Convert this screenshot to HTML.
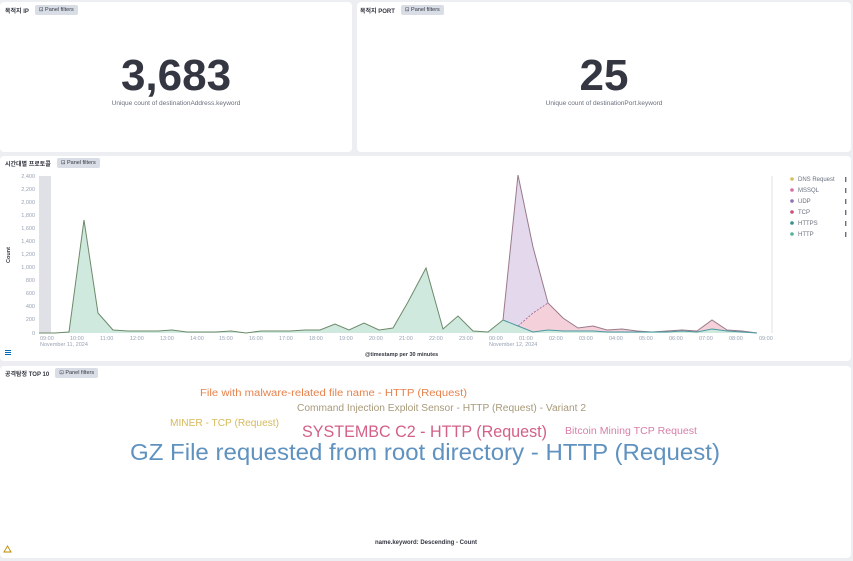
<!DOCTYPE html>
<html><head><meta charset="utf-8"><style>
*{margin:0;padding:0;box-sizing:border-box}
body{width:853px;height:561px;background:#eceef2;font-family:"Liberation Sans","Noto Sans CJK KR",sans-serif;position:relative;overflow:hidden}
.p{position:absolute;background:#fff;border-radius:4px}
.t{position:absolute;font-size:6px;font-weight:bold;color:#343741;display:flex;align-items:center;gap:6px}
.pf{background:#d9dde6;color:#343741;font-weight:normal;padding:2px 4px;border-radius:2px;font-size:5.5px}
.big{position:absolute;width:100%;text-align:center;font-weight:bold;color:#343741;font-size:44px;line-height:44px}
.sub{position:absolute;width:100%;text-align:center;color:#69707d;font-size:6.5px}
</style></head><body>
<div class="p" style="left:0;top:2px;width:352px;height:150px">
<div class="t" style="left:5px;top:3px">목적지 IP <span class="pf">⊡ Panel filters</span></div>
<div class="big" style="top:52px">3,683</div>
<div class="sub" style="top:98px">Unique count of destinationAddress.keyword</div>
</div>
<div class="p" style="left:357px;top:2px;width:494px;height:150px">
<div class="t" style="left:3px;top:3px">목적지 PORT <span class="pf">⊡ Panel filters</span></div>
<div class="big" style="top:52px">25</div>
<div class="sub" style="top:98px">Unique count of destinationPort.keyword</div>
</div>
<div class="p" style="left:0;top:156px;width:851px;height:205px"></div>
<div class="t" style="left:5px;top:158px">시간대별 프로토콜 <span class="pf">⊡ Panel filters</span></div>
<svg style="position:absolute;left:0;top:0" width="853" height="561" font-family="Liberation Sans" font-size="5.5" fill="#98a2b3">
<rect x="39" y="176" width="12" height="157" fill="#dfe1e6"/>
<g text-anchor="end">
<text x="35" y="178">2,400</text><text x="35" y="191">2,200</text><text x="35" y="204">2,000</text><text x="35" y="217">1,800</text><text x="35" y="230">1,600</text><text x="35" y="243">1,400</text><text x="35" y="256">1,200</text><text x="35" y="269">1,000</text><text x="35" y="282">800</text><text x="35" y="295">600</text><text x="35" y="308">400</text><text x="35" y="321">200</text><text x="35" y="335">0</text>
</g>
<text x="10" y="255" transform="rotate(-90 10 255)" text-anchor="middle" fill="#343741" font-weight="bold">Count</text>
<g>
<text x="40" y="340">09:00</text><text x="40" y="346">November 11, 2024</text>
<text x="70" y="340">10:00</text><text x="100" y="340">11:00</text><text x="130" y="340">12:00</text><text x="160" y="340">13:00</text><text x="190" y="340">14:00</text><text x="219" y="340">15:00</text><text x="249" y="340">16:00</text><text x="279" y="340">17:00</text><text x="309" y="340">18:00</text><text x="339" y="340">19:00</text><text x="369" y="340">20:00</text><text x="399" y="340">21:00</text><text x="429" y="340">22:00</text><text x="459" y="340">23:00</text><text x="489" y="340">00:00</text><text x="489" y="346">November 12, 2024</text><text x="519" y="340">01:00</text><text x="549" y="340">02:00</text><text x="579" y="340">03:00</text><text x="609" y="340">04:00</text><text x="639" y="340">05:00</text><text x="669" y="340">06:00</text><text x="699" y="340">07:00</text><text x="729" y="340">08:00</text><text x="759" y="340">09:00</text>
</g>
<text x="365" y="356" fill="#343741" font-weight="bold">@timestamp per 30 minutes</text>
<line x1="772" y1="176" x2="772" y2="333" stroke="#dfe1e6" stroke-width="1"/>
<polygon fill="#cfe9df" points="39,333 55,333 69,332 84,220 98,313 113,330 128,331 143,331 158,331 172,330 187,332 202,332 216,332 231,331 246,333 261,331 275,331 290,331 305,330 320,330 335,324 349,330 364,323 379,330 393,328 408,302 426,268 443,329 458,316 473,331 488,332 503,320 518,326 533,332 548,330 563,331 578,331 593,331 607,332 622,332 637,332 652,332 667,332 682,331 697,332 712,329 727,331 742,332 757,333 757,333"/>
<polygon fill="#e3d8ec" points="503,320 518,175 533,247 548,303 533,313 518,326"/>
<polygon fill="#f4d0da" points="518,326 533,313 548,303 563,318 578,328 593,326 607,330 622,329 637,331 652,332 667,331 682,330 697,331 712,320 727,330 742,331 757,333 742,332 727,331 712,329 697,332 682,331 667,332 652,332 637,332 622,332 607,332 593,331 578,331 563,331 548,330 533,332"/>
<polyline fill="none" stroke="#6d8a6a" stroke-width="1" points="39,333 55,333 69,332 84,220 98,313 113,330 128,331 143,331 158,331 172,330 187,332 202,332 216,332 231,331 246,333 261,331 275,331 290,331 305,330 320,330 335,324 349,330 364,323 379,330 393,328 408,302 426,268 443,329 458,316 473,331 488,332 503,320"/>
<polyline fill="none" stroke="#9a7a8a" stroke-width="1" points="503,320 518,175 533,247 548,303 563,318 578,328 593,326 607,330 622,329 637,331 652,332 667,331 682,330 697,331 712,320 727,330 742,331 757,333"/>
<polyline fill="none" stroke="#9b5c8f" stroke-width="0.8" stroke-dasharray="2,1.5" points="518,326 533,313 548,303"/>
<polyline fill="none" stroke="#4a9aa0" stroke-width="1" points="503,320 518,326 533,332 548,330 563,331 578,331 593,331 607,332 622,332 637,332 652,332 667,332 682,331 697,332 712,329 727,331 742,332 757,333"/>
<g font-size="6" fill="#69707d">
<circle cx="792" cy="179" r="1.8" fill="#d6bf57"/><text x="798" y="181">DNS Request</text>
<circle cx="792" cy="190" r="1.8" fill="#d36fa8"/><text x="798" y="192">MSSQL</text>
<circle cx="792" cy="201" r="1.8" fill="#9170b8"/><text x="798" y="203">UDP</text>
<circle cx="792" cy="212" r="1.8" fill="#ca4f78"/><text x="798" y="214">TCP</text>
<circle cx="792" cy="223" r="1.8" fill="#3a8d8f"/><text x="798" y="225">HTTPS</text>
<circle cx="792" cy="234" r="1.8" fill="#54b399"/><text x="798" y="236">HTTP</text>
</g>
<g fill="#69707d"><rect x="845" y="177" width="1.4" height="5"/><rect x="845" y="188" width="1.4" height="5"/><rect x="845" y="199" width="1.4" height="5"/><rect x="845" y="210" width="1.4" height="5"/><rect x="845" y="221" width="1.4" height="5"/><rect x="845" y="232" width="1.4" height="5"/></g>
<g fill="#006bb8"><rect x="5" y="350" width="6" height="1"/><rect x="5" y="352" width="6" height="1"/><rect x="5" y="354" width="6" height="1"/></g>
</svg>
<div class="p" style="left:0;top:366px;width:851px;height:192px"></div>
<div class="t" style="left:5px;top:368px">공격탐정 TOP 10 <span class="pf">⊡ Panel filters</span></div>
<svg style="position:absolute;left:0;top:0" width="853" height="561" font-family="Liberation Sans,Noto Sans CJK KR,sans-serif">
<text x="200" y="396" font-size="10" fill="#e7824d" textLength="267" lengthAdjust="spacingAndGlyphs">File with malware-related file name - HTTP (Request)</text>
<text x="297" y="411" font-size="10" fill="#a89a7a" textLength="289" lengthAdjust="spacingAndGlyphs">Command Injection Exploit Sensor - HTTP (Request) - Variant 2</text>
<text x="170" y="426" font-size="10.5" fill="#d6b95a" textLength="109" lengthAdjust="spacingAndGlyphs">MINER - TCP (Request)</text>
<text x="302" y="437" font-size="17" fill="#d36086" textLength="245" lengthAdjust="spacingAndGlyphs">SYSTEMBC C2 - HTTP (Request)</text>
<text x="565" y="434" font-size="10.5" fill="#d67fa8" textLength="132" lengthAdjust="spacingAndGlyphs">Bitcoin Mining TCP Request</text>
<text x="130" y="460" font-size="23" fill="#6092c0" textLength="590" lengthAdjust="spacingAndGlyphs">GZ File requested from root directory - HTTP (Request)</text>
<text x="426" y="544" font-size="6" font-weight="bold" fill="#343741" text-anchor="middle">name.keyword: Descending - Count</text>
<path d="M7.5 546 L11 552 L4 552 Z" fill="none" stroke="#bd8a00" stroke-width="0.9"/>
</svg>
</body></html>
